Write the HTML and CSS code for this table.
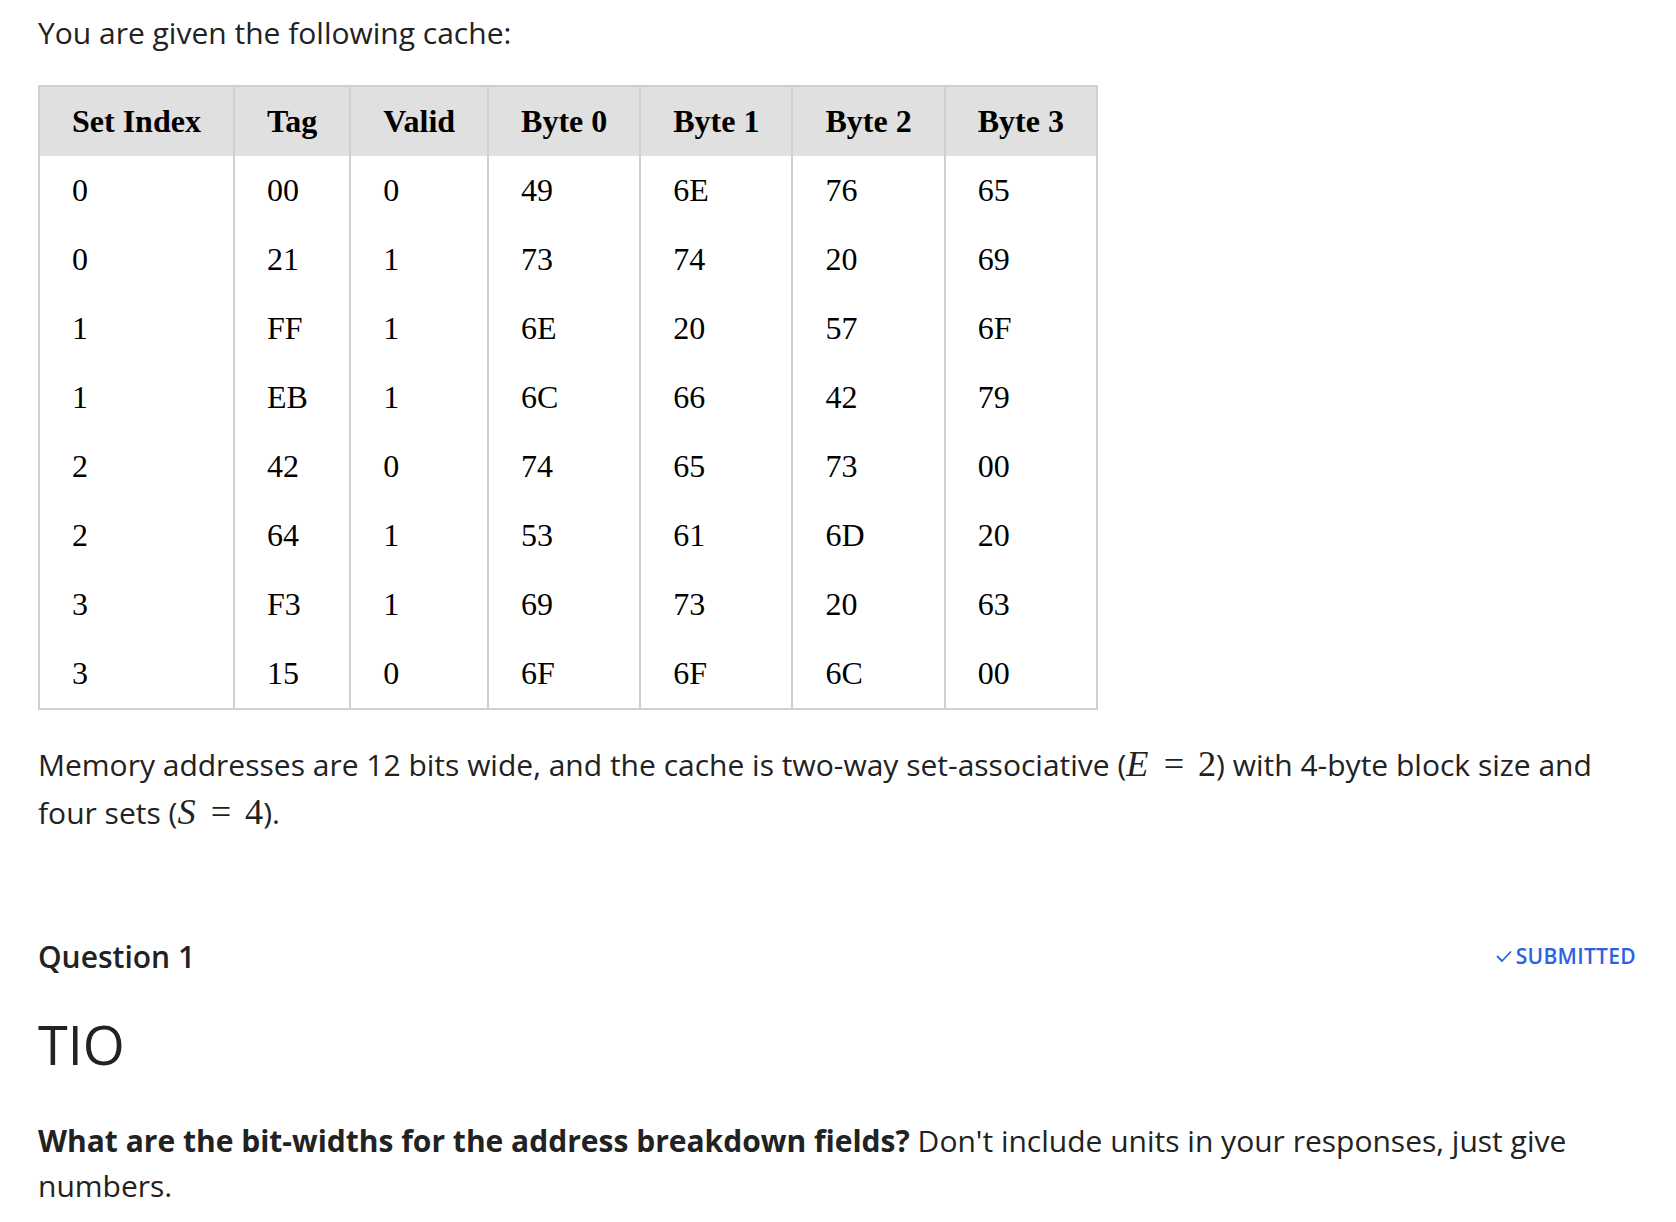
FILE: index.html
```html
<!DOCTYPE html>
<html>
<head>
<meta charset="utf-8">
<link rel="stylesheet" href="styles.css">
</head>
<body>
<div class="page">
  <p class="intro">You are given the following cache:</p>
  <table class="cache">
    <thead>
      <tr><th>Set Index</th><th>Tag</th><th>Valid</th><th>Byte 0</th><th>Byte 1</th><th>Byte 2</th><th>Byte 3</th></tr>
    </thead>
    <tbody>
      <tr><td>0</td><td>00</td><td>0</td><td>49</td><td>6E</td><td>76</td><td>65</td></tr>
      <tr><td>0</td><td>21</td><td>1</td><td>73</td><td>74</td><td>20</td><td>69</td></tr>
      <tr><td>1</td><td>FF</td><td>1</td><td>6E</td><td>20</td><td>57</td><td>6F</td></tr>
      <tr><td>1</td><td>EB</td><td>1</td><td>6C</td><td>66</td><td>42</td><td>79</td></tr>
      <tr><td>2</td><td>42</td><td>0</td><td>74</td><td>65</td><td>73</td><td>00</td></tr>
      <tr><td>2</td><td>64</td><td>1</td><td>53</td><td>61</td><td>6D</td><td>20</td></tr>
      <tr><td>3</td><td>F3</td><td>1</td><td>69</td><td>73</td><td>20</td><td>63</td></tr>
      <tr><td>3</td><td>15</td><td>0</td><td>6F</td><td>6F</td><td>6C</td><td>00</td></tr>
    </tbody>
  </table>
  <p class="desc">Memory addresses are 12 bits wide, and the cache is two-way set-associative (<span class="math"><i>E</i><span class="rel">=</span>2</span>) with 4-byte block size and four sets (<span class="math"><i>S</i><span class="rel">=</span>4</span>).</p>
  <div class="qhead">
    <span class="qnum">Question 1</span>
    <span class="status"><svg class="check" width="18" height="18" viewBox="0 0 18 18"><path d="M2.5 9.5 L7 14 L15.5 5" fill="none" stroke="currentColor" stroke-width="1.8" stroke-linecap="round" stroke-linejoin="round"/></svg>SUBMITTED</span>
  </div>
  <h2 class="qtitle">TIO</h2>
  <p class="qtext"><b>What are the bit-widths for the address breakdown fields?</b> Don't include units in your responses, just give numbers.</p>
</div>
</body>
</html>
```
FILE: styles.css
```css
html, body { margin: 0; padding: 0; background: #fff; }
body { font-family: "Open Sans", "Noto Sans", sans-serif; color: #222; }
.page { padding: 0 38px; }
.intro { margin: 9px 0 0; font-size: 30px; line-height: 48px; }
.cache {
  margin-top: 28px;
  border-collapse: collapse;
  font-family: "Liberation Serif", "Times New Roman", serif;
  font-size: 32px;
  color: #000;
  border: 2px solid #cfcfcf;
}
.cache th, .cache td {
  border-left: 2px solid #cfcfcf;
  border-right: 2px solid #cfcfcf;
  padding: 16px 32px;
  text-align: left;
  line-height: normal;
}
.cache th { background: #e0e0e0; font-weight: bold; }
.desc { margin: 31px 0 0; font-size: 30px; line-height: 48px; }
.math { font-family: "Liberation Serif", "Times New Roman", serif; font-size: 1.21em; line-height: 1; }
.math i { font-style: italic; padding-right: 0.04em; }
.math .rel { margin: 0 0.38em; }
.qhead { display: flex; justify-content: space-between; align-items: center; margin-top: 99px; height: 40px; }
.qnum { font-size: 30px; font-weight: 600; }
.status { color: #2a62e4; font-size: 21px; font-weight: 600; letter-spacing: 0.3px; display: flex; align-items: center; gap: 3px; padding-right: 2px; }
.check { display: block; }
.qtitle { margin: 36px 0 0; font-size: 54px; font-weight: 400; line-height: 64px; }
.qtext { margin: 42px 0 0; font-size: 30px; line-height: 45px; }
.qtext b { font-weight: 700; }
```
